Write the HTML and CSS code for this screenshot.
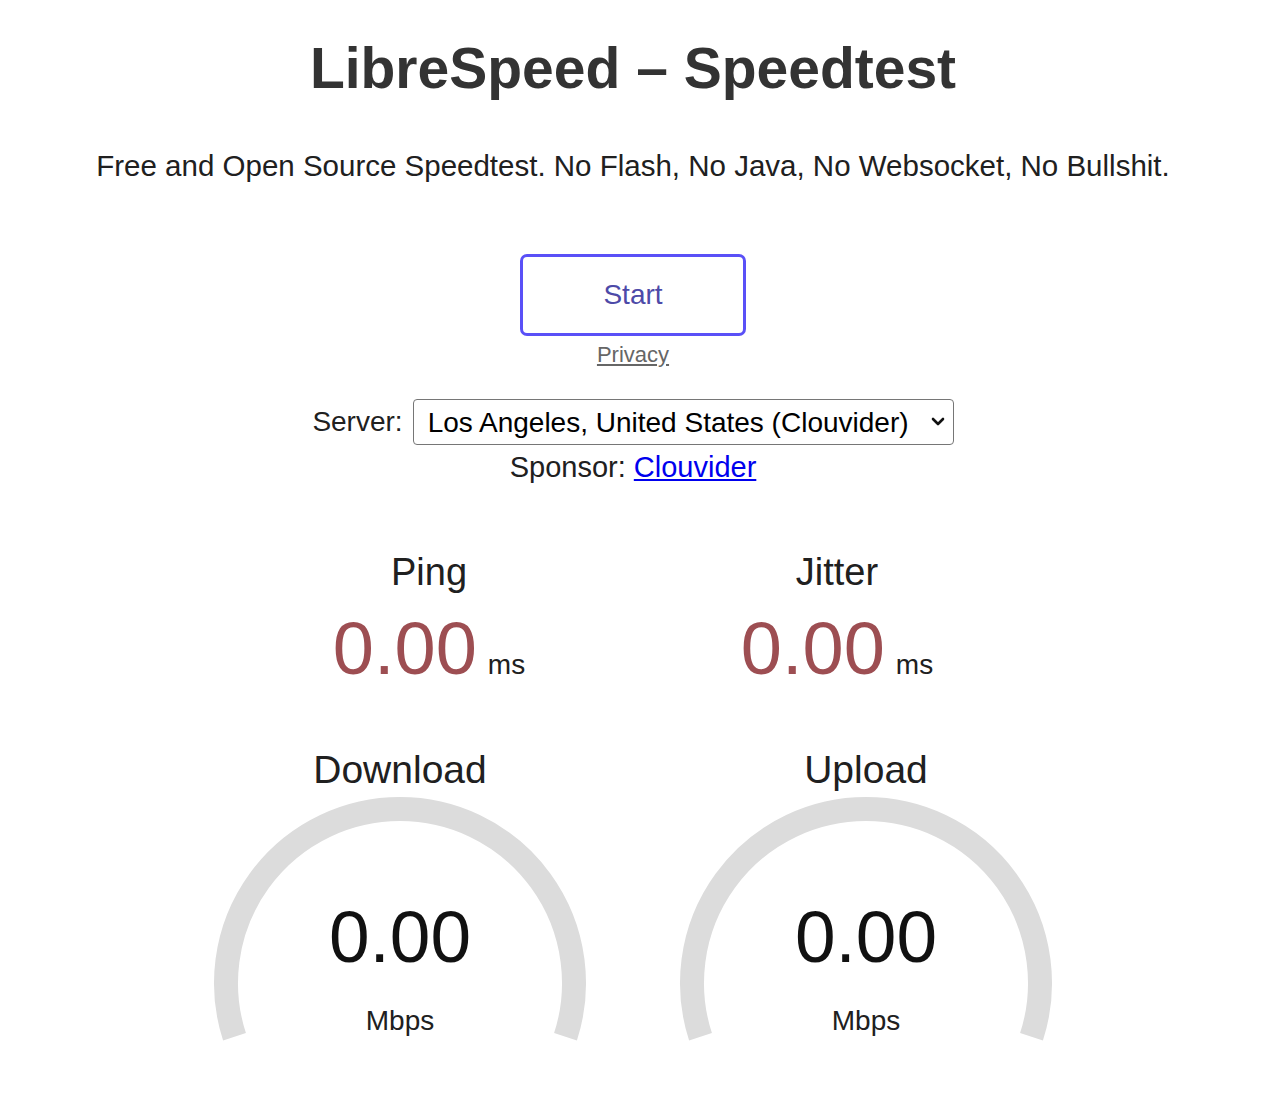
FILE: index.html
```html
<!DOCTYPE html>
<html lang="en">
<head>
  <meta charset="UTF-8" />
  <meta name="viewport" content="width=device-width, initial-scale=1.0" />
  <title>LibreSpeed - Speedtest</title>
  <link rel="stylesheet" href="styles.css">
</head>
<body>
  <div class="page">
    <h1 class="title">LibreSpeed &ndash; Speedtest</h1>
    <p class="tagline">Free and Open Source Speedtest. No Flash, No Java, No Websocket, No Bullshit.</p>

    <!-- Start button + privacy -->
    <button class="start-btn">Start</button>
    <div class="privacy"><a href="#">Privacy</a></div>

    <!-- Server picker -->
    <div class="server-row">
      <label for="server">Server:</label>
      <span class="select-wrap">
        <select id="server" class="server-select">
          <option>Los Angeles, United States (Clouvider)</option>
        </select>
        <svg class="chevron" width="14" height="9" viewBox="0 0 14 9">
          <path d="M2 2 L7 7 L12 2" fill="none" stroke="#111" stroke-width="2.6" stroke-linecap="round" stroke-linejoin="round"/>
        </svg>
      </span>
    </div>
    <div class="sponsor">Sponsor: <a href="#">Clouvider</a></div>

    <!-- Ping / Jitter -->
    <div class="test-row small">
      <div class="test">
        <div class="test-name">Ping</div>
        <div class="meter"><span class="meter-value">0.00</span><span class="unit">ms</span></div>
      </div>
      <div class="test">
        <div class="test-name">Jitter</div>
        <div class="meter"><span class="meter-value">0.00</span><span class="unit">ms</span></div>
      </div>
    </div>

    <!-- Download / Upload gauges -->
    <div class="test-row big">
      <div class="test">
        <div class="test-name">Download</div>
        <div class="gauge">
          <svg class="gauge-arc" width="400" height="262" viewBox="0 0 400 262">
            <path d="M34.5 241.8 A174 174 0 1 1 365.5 241.8" fill="none" stroke="#dcdcdc" stroke-width="24"/>
          </svg>
          <div class="gauge-text">
            <div class="gauge-value">0.00</div>
            <div class="gauge-unit">Mbps</div>
          </div>
        </div>
      </div>
      <div class="test">
        <div class="test-name">Upload</div>
        <div class="gauge">
          <svg class="gauge-arc" width="400" height="262" viewBox="0 0 400 262">
            <path d="M34.5 241.8 A174 174 0 1 1 365.5 241.8" fill="none" stroke="#dcdcdc" stroke-width="24"/>
          </svg>
          <div class="gauge-text">
            <div class="gauge-value">0.00</div>
            <div class="gauge-unit">Mbps</div>
          </div>
        </div>
      </div>
    </div>
  </div>
</body>
</html>
```

FILE: styles.css
```css
:root {
  --text: #202020;
  --ping: #9d4e52;
  --btn: #5a50f7;
  --btn-text: #4d4aa8;
  --gauge: #dcdcdc;
}

body {
  margin: 0;
  background: #fff;
  color: var(--text);
  font-family: "Liberation Sans", Arial, sans-serif;
}
.page {
  width: 1266px;
  text-align: center;
}

/* Header */
.title {
  margin: 34px 0 0;
  font-size: 57px;
  line-height: 68px;
  font-weight: bold;
  color: #333;
}
.tagline {
  margin: 48px 0 0;
  font-size: 29.5px;
  line-height: 32px;
}

/* Start button */
.start-btn {
  display: block;
  box-sizing: border-box;
  width: 226px;
  height: 82px;
  margin: 72px auto 0;
  background: #fff;
  border: 3px solid var(--btn);
  border-radius: 7px;
  color: var(--btn-text);
  font-family: inherit;
  font-size: 28px;
  cursor: pointer;
}
.privacy {
  margin-top: 6px;
  font-size: 22px;
  line-height: 26px;
}
.privacy a {
  color: #666;
}

/* Server selection */
.server-row {
  display: flex;
  justify-content: center;
  align-items: center;
  gap: 10px;
  margin-top: 31px;
  font-size: 28px;
}
.select-wrap {
  position: relative;
  display: inline-block;
}
.server-select {
  appearance: none;
  -webkit-appearance: none;
  box-sizing: border-box;
  width: 541px;
  height: 46px;
  padding: 0 40px 0 14px;
  background: #fff;
  border: 1px solid #767676;
  border-radius: 4px;
  color: #000;
  font-family: inherit;
  font-size: 28px;
}
.chevron {
  position: absolute;
  right: 9px;
  top: 18px;
  pointer-events: none;
}
.sponsor {
  margin-top: 5px;
  font-size: 29px;
  line-height: 34px;
}
.sponsor a {
  color: #0000ee;
}

/* Test results */
.test-row {
  display: flex;
  justify-content: center;
}
.test-row.small {
  margin-top: 65px;
}
.test-row.small .test {
  width: 408px;
}
.test-row.big {
  margin-top: 58px;
}
.test-row.big .test {
  width: 466px;
}
.test-name {
  font-size: 38px;
  line-height: 46px;
}
.test-row.big .test-name {
  font-size: 39px;
}
.meter {
  height: 80px;
  margin-top: 14px;
  line-height: 80px;
}
.meter-value {
  font-size: 74px;
  color: var(--ping);
}
.unit {
  margin-left: 11px;
  font-size: 28px;
  line-height: 1;
}

/* Gauges */
.gauge {
  display: grid;
  justify-items: center;
  margin-top: 2px;
}
.gauge-arc,
.gauge-text {
  grid-area: 1 / 1;
}
.gauge-text {
  padding-top: 102px;
}
.gauge-value {
  font-size: 73px;
  line-height: 80px;
  color: #111;
}
.gauge-unit {
  margin-top: 27px;
  font-size: 28px;
  line-height: 34px;
}
```
